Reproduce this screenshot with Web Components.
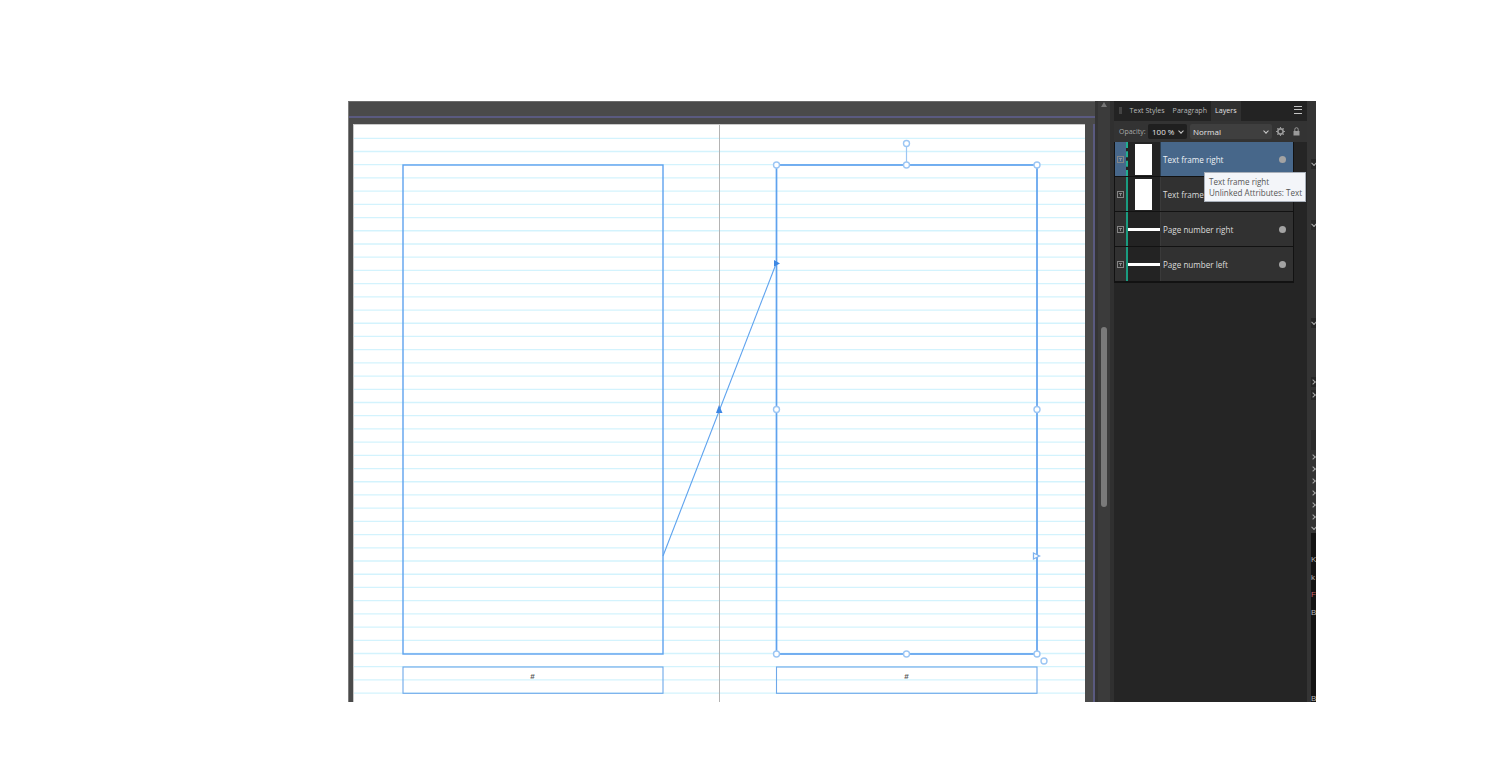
<!DOCTYPE html>
<html>
<head>
<meta charset="utf-8">
<title>Layers</title>
<style>
  html, body { margin: 0; background: #ffffff; }
  body { height: 770px; overflow: hidden; font-family: "Open Sans", "Liberation Sans", sans-serif; }
</style>
</head>
<body>
<app-window>
  <canvas-view slot="canvas"></canvas-view>
  <view-scroller slot="scroller"></view-scroller>
  <layers-panel slot="panel">
    <layer-row selected thumb="frame">Text frame right</layer-row>
    <layer-row thumb="frame">Text frame left</layer-row>
    <layer-row thumb="bar">Page number right</layer-row>
    <layer-row thumb="bar">Page number left</layer-row>
    <layer-tooltip slot="overlay">Text frame right<br>Unlinked Attributes: Text</layer-tooltip>
  </layers-panel>
  <side-strip slot="strip"></side-strip>
</app-window>

<script>
customElements.define(
  "app-window",
  class AppWindow extends HTMLElement {
    constructor() {
      super();
      this.attachShadow({mode: "open"});
    }

    connectedCallback() {
      this.shadowRoot.innerHTML = `
      <style>
        :host {
          display: flex;
          width: 968px;
          height: 601px;
          margin: 101px 0 0 348px;
          overflow: hidden;
        }
      </style>
      <slot name="canvas"></slot>
      <slot name="scroller"></slot>
      <slot name="panel"></slot>
      <slot name="strip"></slot>
      `;
    }
  }
);

customElements.define(
  "canvas-view",
  class CanvasView extends HTMLElement {
    constructor() {
      super();
      this.attachShadow({mode: "open"});
    }

    connectedCallback() {
      const guides = [];
      for (let i = 0; i < 44; i++) {
        const y = 138.3 + i * 13.21;
        guides.push(`<line x1="354" x2="1085" y1="${y}" y2="${y}"/>`);
      }

      const handle = (x, y) => `<circle cx="${x}" cy="${y}" r="3"/>`;
      const handles = [
        [776.5, 165], [906.5, 165], [1037, 165],
        [776.5, 409.5], [1037, 409.5],
        [776.5, 654], [906.5, 654], [1037, 654],
        [906.5, 143.5], [1044, 661],
      ].map((p) => handle(p[0], p[1])).join("");

      this.shadowRoot.innerHTML = `
      <style>
        :host {
          display: flex;
          flex-direction: column;
          width: 747px;
          height: 601px;
          box-sizing: border-box;
          background: #4a4a4a;
          border-top: 1px solid #6c6c6c;
          border-left: 1px solid #7d7d7d;
        }
        .top {
          height: 14px;
          border-bottom: 2px solid #5a5a80;
          flex: none;
        }
        .body {
          flex: 1;
          display: flex;
          padding: 6px 0 0 5px;
          min-height: 0;
        }
        .page {
          width: 731px;
          height: 578px;
          flex: none;
          background: #fff;
          box-shadow: -1px 0 0 #c9c9c9;
        }
        .gutter {
          width: 8px;
          flex: none;
          border-right: 2px solid #5a5a80;
        }
        svg { display: block; }
        .edge { stroke: #c9c9c9; stroke-width: 1; }
        .guides line { stroke: #d3f3fd; stroke-width: 1.3; }
        .frame { fill: none; stroke: #5ea2ee; stroke-width: 1.4; }
        .frame-thin { fill: none; stroke: #6ea8ea; stroke-width: 1.1; }
        .selected { fill: none; stroke: #5ea2ee; stroke-width: 1.7; }
        .handles circle { fill: #fff; stroke: #9cc6f4; stroke-width: 1.4; }
        .stem { stroke: #9cc6f4; stroke-width: 1.2; }
        .link { stroke: #5ea2ee; stroke-width: 1.1; }
        .arrow { fill: #3d87e4; }
        .arrow-out { fill: #fff; stroke: #7fb2ee; stroke-width: 1.3; }
        .centre { stroke: #b3b3b3; stroke-width: 1; }
        text { font: bold 8px "Liberation Sans", sans-serif; fill: #555; text-anchor: middle; }
      </style>
      <div class="top"></div>
      <div class="body">
        <div class="page">
          <svg width="731" height="578" viewBox="354 124 731 578">
            <line class="edge" x1="354" x2="1085" y1="124.5" y2="124.5"/>
            <g class="guides">${guides.join("")}</g>
            <line class="centre" x1="719.5" x2="719.5" y1="125" y2="702"/>
            <rect class="frame" x="403" y="165" width="260" height="489"/>
            <rect class="frame-thin" x="403" y="667" width="260" height="26.3"/>
            <rect class="frame-thin" x="776.5" y="667" width="260.5" height="26.3"/>
            <text x="532.5" y="679">#</text>
            <text x="906.5" y="679">#</text>
            <line class="link" x1="663" y1="556" x2="776" y2="264"/>
            <rect class="selected" x="776.5" y="165" width="260.5" height="489"/>
            <line class="stem" x1="906.5" y1="146" x2="906.5" y2="165"/>
            <path class="arrow" d="M774 260 L780 263.5 L774 266.5 Z"/>
            <path class="arrow" d="M719 405 L722.5 413 L716 413 Z"/>
            <path class="arrow-out" d="M1033.5 553 L1039.5 556 L1033.5 559 Z"/>
            <g class="handles">${handles}</g>
          </svg>
        </div>
        <div class="gutter"></div>
      </div>
      `;
    }
  }
);

customElements.define(
  "view-scroller",
  class ViewScroller extends HTMLElement {
    constructor() {
      super();
      this.attachShadow({mode: "open"});
    }

    connectedCallback() {
      this.shadowRoot.innerHTML = `
      <style>
        :host {
          display: flex;
          flex-direction: column;
          align-items: center;
          width: 19px;
          height: 601px;
          flex: none;
          box-sizing: border-box;
          padding-right: 1px;
          background: linear-gradient(to right, #343434 0 3px, #3b3b3b 3px 15px, #303030 15px);
        }
        .up {
          width: 0;
          height: 0;
          margin-top: 1px;
          border-left: 3px solid transparent;
          border-right: 3px solid transparent;
          border-bottom: 5px solid #777;
        }
        .thumb {
          width: 6px;
          height: 180px;
          margin-top: 220px;
          border-radius: 3px;
          background: #7a7a7a;
        }
      </style>
      <div class="up"></div>
      <div class="thumb"></div>
      `;
    }
  }
);

customElements.define(
  "layers-panel",
  class LayersPanel extends HTMLElement {
    constructor() {
      super();
      this.attachShadow({mode: "open"});
    }

    connectedCallback() {
      this.shadowRoot.innerHTML = `
      <style>
        :host {
          display: flex;
          flex-direction: column;
          position: relative;
          width: 193px;
          height: 601px;
          flex: none;
          background: #252525;
          color: #d8d8d8;
          font: 8px "Open Sans", "Liberation Sans", sans-serif;
        }
        .tabs {
          display: flex;
          align-items: stretch;
          height: 20px;
          flex: none;
          box-sizing: border-box;
          background: #232323;
          padding-left: 3px;
          font-size: 7.1px;
        }
        .grip {
          width: 3px;
          height: 7px;
          margin: 6px 3.5px 0 2px;
          background: #444;
        }
        .tab {
          display: flex;
          align-items: center;
          padding: 0 4px 3px;
          color: #b8b8b8;
        }
        .tab.on { background: #303030; color: #e4e4e4; }
        .menu {
          margin: -2px 5px 0 auto;
          align-self: center;
          width: 8px;
          height: 6px;
          border-top: 1.3px solid #c4c4c4;
          border-bottom: 1.3px solid #c4c4c4;
          background: linear-gradient(#c4c4c4, #c4c4c4) center / 100% 1.3px no-repeat;
        }
        .controls {
          display: flex;
          align-items: center;
          height: 21px;
          flex: none;
          box-sizing: border-box;
          background: #333333;
          padding-left: 5px;
        }
        .label { color: #a8a8a8; width: 29px; flex: none; font-size: 7px; }
        .select {
          display: flex;
          align-items: center;
          justify-content: space-between;
          height: 15px;
          box-sizing: border-box;
          border-radius: 2px;
          color: #e4e4e4;
          flex: none;
        }
        .opacity { width: 39px; background: #1f1f1f; margin-right: 3px; padding: 0 4px; }
        .blend { width: 82px; background: #3f3f3f; padding: 0 4px 0 3px; }
        .chev {
          width: 3px;
          height: 3px;
          margin-top: -2px;
          border-right: 1px solid #ccc;
          border-bottom: 1px solid #ccc;
          transform: rotate(45deg);
        }
        .tool { margin-left: 4px; display: block; flex: none; }
        .rows {
          display: flex;
          flex-direction: column;
          width: 180px;
          border-bottom: 1px solid #121212;
          border-left: 1px solid #121212;
          border-right: 1px solid #121212;
          box-sizing: border-box;
        }
      </style>
      <div class="tabs">
        <div class="grip"></div>
        <div class="tab">Text Styles</div>
        <div class="tab">Paragraph</div>
        <div class="tab on">Layers</div>
        <div class="menu"></div>
      </div>
      <div class="controls">
        <span class="label">Opacity:</span>
        <div class="select opacity"><span>100 %</span><span class="chev"></span></div>
        <div class="select blend"><span>Normal</span><span class="chev"></span></div>
        <svg class="tool" width="9" height="9" viewBox="0 0 9 9">
          <circle cx="4.5" cy="4.5" r="2.6" fill="none" stroke="#9a9a9a" stroke-width="1.6"/>
          <path d="M4.5 0v2M4.5 7v2M0 4.5h2M7 4.5h2M1.3 1.3l1.4 1.4M6.3 6.3l1.4 1.4M7.7 1.3L6.3 2.7M2.7 6.3L1.3 7.7" stroke="#9a9a9a" stroke-width="1.1"/>
        </svg>
        <svg class="tool" style="margin-left:8px" width="7" height="9" viewBox="0 0 7 9">
          <rect x="0.5" y="4" width="6" height="4.5" fill="#9a9a9a"/>
          <path d="M1.8 4V2.4a1.7 1.7 0 0 1 3.4 0V4" fill="none" stroke="#9a9a9a"/>
        </svg>
      </div>
      <div class="rows"><slot></slot></div>
      <slot name="overlay"></slot>
      `;
    }
  }
);

customElements.define(
  "layer-row",
  class LayerRow extends HTMLElement {
    constructor() {
      super();
      this.attachShadow({mode: "open"});
    }

    connectedCallback() {
      const thumb = this.getAttribute("thumb");
      this.shadowRoot.innerHTML = `
      <style>
        :host {
          display: flex;
          align-items: stretch;
          height: 35px;
          box-sizing: border-box;
          background: #313131;
          border-bottom: 1px solid #121212;
          color: #dcdcdc;
          font-size: 8.1px;
        }
        :host([selected]) { background: #47678a; color: #eef2f6; }
        .kind {
          width: 11px;
          flex: none;
          display: flex;
          align-items: center;
          justify-content: center;
          padding-right: 1px;
          box-sizing: border-box;
        }
        .thumb {
          width: 35px;
          flex: none;
          box-sizing: border-box;
          display: flex;
          align-items: center;
          justify-content: center;
          background: #232323;
          border-left: 2px solid #1a9c80;
          border-right: 1px solid #3a3a3a;
        }
        :host([selected]) .thumb { border-left: 2px dashed #1fae90; border-right-color: #2c3e50; }
        .page { width: 17px; height: 31px; background: #fff; margin-left: -1px; }
        .bar { width: 100%; height: 3px; background: #fff; }
        .name { flex: 1; padding-left: 2px; display: flex; align-items: center; white-space: nowrap; overflow: hidden; }
        .dot {
          width: 7px;
          height: 7px;
          flex: none;
          align-self: center;
          margin-right: 7px;
          border-radius: 50%;
          background: #a3a3a3;
        }
      </style>
      <div class="kind">
        <svg width="7" height="7" viewBox="0 0 7 7">
          <rect x="0.5" y="0.5" width="6" height="6" fill="none" stroke="#858585"/>
          <path d="M2 2.5h3M3.5 2.5v2.5" stroke="#9a9a9a" stroke-width="0.8"/>
        </svg>
      </div>
      <div class="thumb"><div class="${thumb === "bar" ? "bar" : "page"}"></div></div>
      <div class="name"><slot></slot></div>
      <div class="dot"></div>
      `;
    }
  }
);

customElements.define(
  "layer-tooltip",
  class LayerTooltip extends HTMLElement {
    constructor() {
      super();
      this.attachShadow({mode: "open"});
    }

    connectedCallback() {
      this.shadowRoot.innerHTML = `
      <style>
        :host {
          position: absolute;
          left: 90px;
          top: 71px;
          box-sizing: border-box;
          width: 102px;
          height: 30px;
          padding: 3px 4px;
          background: #f3f5f9;
          border: 1px solid #a9b0ba;
          color: #555;
          font: 8.05px/11px "Open Sans", "Liberation Sans", sans-serif;
          white-space: nowrap;
        }
      </style>
      <slot></slot>
      `;
    }
  }
);

customElements.define(
  "side-strip",
  class SideStrip extends HTMLElement {
    constructor() {
      super();
      this.attachShadow({mode: "open"});
    }

    connectedCallback() {
      // only the left edge of this panel is visible, the rest is cut off by the capture
      const chev = (top, open, boxed) => `
        <div class="chev ${open ? "open" : ""} ${boxed ? "boxed" : ""}" style="height:${boxed ? 10 : 11}px;margin-top:${top}px"></div>`;
      this.shadowRoot.innerHTML = `
      <style>
        :host {
          display: flex;
          flex-direction: column;
          width: 9px;
          height: 601px;
          flex: none;
          overflow: hidden;
          background: #343434;
        }
        .chev { flex: none; width: 5px; margin-left: 4px; position: relative; }
        .boxed { background: #272727; }
        .chev::after {
          content: "";
          position: absolute;
          left: 0;
          top: 50%;
          width: 3px;
          height: 3px;
          border-right: 1px solid #aaa;
          border-bottom: 1px solid #aaa;
          transform: translateY(-50%) rotate(-45deg);
        }
        .chev.open::after { transform: translateY(-70%) rotate(45deg); left: 1px; }
        .box { flex: none; height: 20px; width: 5px; margin: 30px 0 0 4px; background: #2a2a2a; }
        .dark {
          flex: 1;
          margin: 0 0 0 4px;
          width: 5px;
          background: #141414;
          color: #b5b5b5;
          font: 8px/10px "Liberation Sans", sans-serif;
          overflow: hidden;
          white-space: nowrap;
          padding-top: 22px;
        }
        .dark div { height: 17.5px; }
        .dark .last { margin-top: 69px; }
        .red { color: #c9606a; }
      </style>
      ${chev(58, true, true)}
      ${chev(51, true, true)}
      ${chev(88, true, true)}
      ${chev(49, false, true)}
      ${chev(3, false, true)}
      <div class="box"></div>
      ${chev(1, false)}${chev(1, false)}${chev(1, false)}${chev(1, false)}${chev(1, false)}${chev(1, false)}${chev(0, true)}
      <div class="dark">
        <div>K</div>
        <div>k</div>
        <div class="red">F</div>
        <div>B</div>
        <div class="last">B</div>
      </div>
      `;
    }
  }
);
</script>
</body>
</html>
